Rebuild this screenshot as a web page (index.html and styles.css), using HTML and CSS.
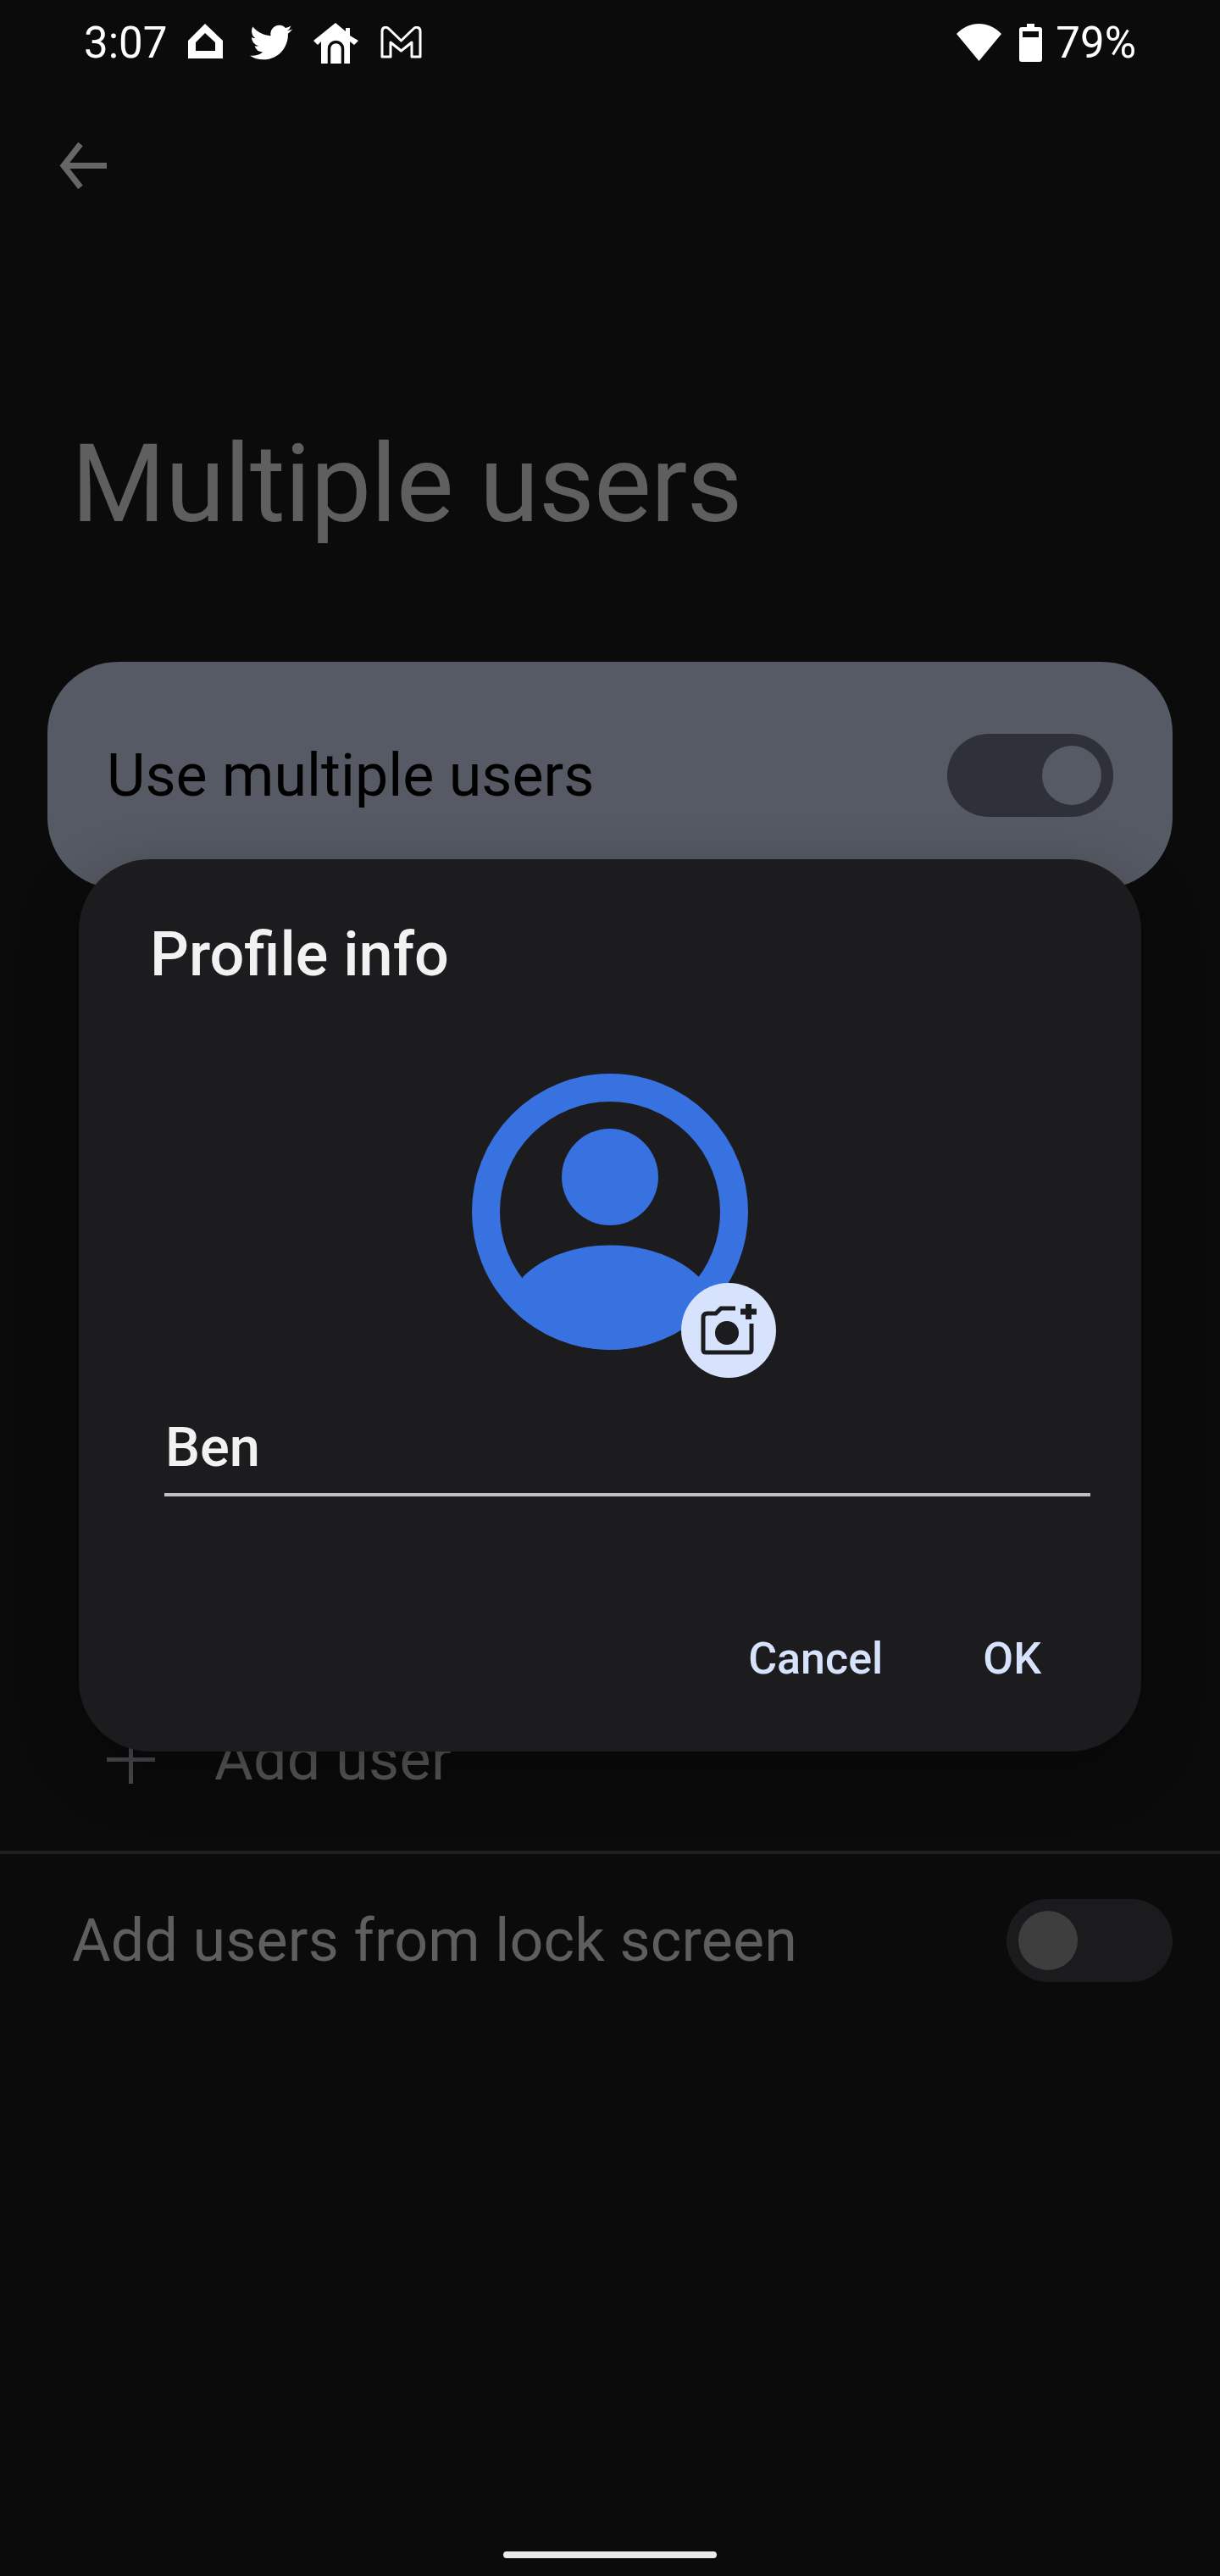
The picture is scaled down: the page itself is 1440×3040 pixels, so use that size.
FILE: index.html
```html
<!DOCTYPE html>
<html lang="en">
<head>
  <meta charset="UTF-8" />
  <title>Multiple users</title>
  <link rel="stylesheet" href="styles.css">
</head>
<body>
  <div class="screen">
    <div class="status-bar">
      <div class="status-left">
        <span class="time">3:07</span>
        <svg class="icon-ghome" viewBox="0 0 41 41"><path fill-rule="evenodd" fill="#fff" d="M20 0 41 20V41H0V20ZM20 11 9 22V32H32V22Z"/></svg>
        <svg class="icon-twitter" viewBox="0 0 24 24"><path fill="#fff" d="M23.953 4.57a10 10 0 01-2.825.775 4.958 4.958 0 002.163-2.723c-.951.555-2.005.959-3.127 1.184a4.92 4.92 0 00-8.384 4.482C7.69 8.095 4.067 6.13 1.64 3.162a4.822 4.822 0 00-.666 2.475c0 1.71.87 3.213 2.188 4.096a4.904 4.904 0 01-2.228-.616v.06a4.923 4.923 0 003.946 4.827 4.996 4.996 0 01-2.212.085 4.936 4.936 0 004.604 3.417 9.867 9.867 0 01-6.102 2.105c-.39 0-.779-.023-1.17-.067a13.995 13.995 0 007.557 2.209c9.053 0 13.998-7.496 13.998-13.985 0-.21 0-.42-.015-.63A9.935 9.935 0 0024 4.59z"/></svg>
        <svg class="icon-house" viewBox="0 0 53 49"><path fill="#fff" d="M26 1 38 11V7H43V16L53 22 48 27 43 23V49H9V23L5 27 0 22Z"/><path fill="none" stroke="#0b0b0c" stroke-width="3.500" d="M18.500 49V31.500A8 8 0 0 1 34.500 31.500V49"/></svg>
        <svg class="icon-gmail" viewBox="0 0 49 38"><path fill="none" stroke="#fff" stroke-width="3" stroke-linejoin="round" d="M2 6C2 1 7 0 10 3L24.500 17 39 3C42 0 47 1 47 6V36H37V19L24.500 29 12 19V36H2Z"/></svg>
      </div>
      <div class="status-right">
        <svg class="icon-wifi" viewBox="0 0 53 44"><path fill="#fff" d="M0 12C15-4 38-4 53 12L26.500 44Z"/></svg>
        <svg class="icon-battery" viewBox="0 0 27 45"><path fill-rule="evenodd" fill="#fff" d="M9 0H18V4H24Q27 4 27 7V42Q27 45 24 45H3Q0 45 0 42V7Q0 4 3 4H9ZM4 9V16H23V9Z"/></svg>
        <span class="battery-text">79%</span>
      </div>
    </div>

    <div class="app-bar">
      <svg class="back-arrow" viewBox="0 0 56 55"><path fill="none" stroke="#666" stroke-width="7" d="M56 27.500H5M25 2 5 27.500 25 53"/></svg>
    </div>

    <h1 class="page-title">Multiple users</h1>

    <div class="main-card">
      <span>Use multiple users</span>
      <div class="toggle toggle-on"><div class="toggle-thumb"></div></div>
    </div>

    <div class="add-user">
      <svg class="plus-icon" viewBox="0 0 57 57"><path fill="none" stroke="#4b4b50" stroke-width="5" d="M0 28.500H57M28.500 0V57"/></svg>
      <span>Add user</span>
    </div>

    <div class="divider"></div>

    <div class="lock-row">
      <span>Add users from lock screen</span>
      <div class="toggle toggle-off"><div class="toggle-thumb"></div></div>
    </div>

    <div class="home-indicator"></div>

    <div class="dialog">
      <h2 class="dialog-title">Profile info</h2>
      <div class="avatar-wrap">
        <svg class="avatar" viewBox="0 0 326 326">
          <defs><clipPath id="avatarClip"><circle cx="163" cy="163" r="163"/></clipPath></defs>
          <circle cx="163" cy="163" r="146.500" fill="none" stroke="#3871e0" stroke-width="33"/>
          <circle cx="163" cy="122" r="57" fill="#3871e0"/>
          <path clip-path="url(#avatarClip)" fill="#3871e0" d="M60 240C110 190 216 190 268 240L280 326H46Z"/>
        </svg>
        <div class="camera-badge">
          <svg viewBox="0 0 112 112">
            <path fill="none" stroke="#1c1c1e" stroke-width="5" d="M64 30H47L41 36H31Q26 36 26 41V79Q26 82 29 82H80Q83 82 83 79V48"/>
            <circle cx="54" cy="59" r="14" fill="#1c1c1e"/>
            <path fill="none" stroke="#1c1c1e" stroke-width="7" d="M70 34H89M79.500 25V43"/>
          </svg>
        </div>
      </div>
      <div class="name-field">Ben</div>
      <div class="dialog-actions">
        <span>Cancel</span>
        <span>OK</span>
      </div>
    </div>
  </div>
</body>
</html>
```

FILE: styles.css
```css
* {
  box-sizing: border-box;
}
html, body {
  margin: 0;
  padding: 0;
}
body {
  background: #0b0b0c;
  font-family: 'Roboto', 'Noto Sans', sans-serif;
}
.screen {
  position: relative;
  width: 1440px;
  height: 3040px;
  overflow: hidden;
  background: #0b0b0c;
}
.status-bar {
  display: flex;
  justify-content: space-between;
  align-items: center;
  height: 100px;
  padding: 0 99px;
  color: #fff;
}
.status-left,
.status-right {
  display: flex;
  align-items: center;
}
.time {
  font-size: 51px;
  width: 123px;
}
.icon-ghome {
  width: 41px;
  height: 41px;
  margin: -3px 32px 0 0;
}
.icon-twitter {
  width: 50px;
  height: 50px;
  margin-right: 25px;
}
.icon-house {
  width: 53px;
  height: 49px;
  margin-right: 26px;
}
.icon-gmail {
  width: 49px;
  height: 38px;
}
.icon-wifi {
  width: 53px;
  height: 44px;
  margin-right: 21px;
}
.icon-battery {
  width: 27px;
  height: 45px;
  margin-right: 16px;
}
.battery-text {
  font-size: 51px;
}
.app-bar {
  height: 96px;
  padding: 68px 0 0 70px;
}
.back-arrow {
  display: block;
  width: 56px;
  height: 55px;
}
.page-title {
  margin: 0;
  height: 585px;
  padding: 305px 0 0 84px;
  font-size: 128px;
  line-height: 140px;
  font-weight: 400;
  letter-spacing: -0.8px;
  color: #5f5f5f;
}
.main-card {
  display: flex;
  justify-content: space-between;
  align-items: center;
  width: 1328px;
  height: 268px;
  margin-left: 56px;
  padding: 0 70px;
  border-radius: 84px;
  background: #565a64;
  color: #000;
  font-size: 70px;
}
.toggle {
  display: flex;
  align-items: center;
  width: 196px;
  height: 98px;
  border-radius: 49px;
  padding: 0 14px;
}
.toggle-thumb {
  width: 70px;
  height: 70px;
  border-radius: 50%;
}
.toggle-on {
  justify-content: flex-end;
  background: #2e3138;
}
.toggle-on .toggle-thumb {
  background: #565a64;
}
.toggle-off {
  background: #1b1b1d;
}
.toggle-off .toggle-thumb {
  background: #3e3e3e;
}
.add-user {
  display: flex;
  align-items: center;
  gap: 70px;
  margin: 960px 0 41px;
  padding-left: 126px;
  height: 134px;
  color: #5a5a5a;
  font-size: 70px;
  letter-spacing: 0.3px;
}
.plus-icon {
  width: 57px;
  height: 57px;
}
.divider {
  height: 4px;
  background: #1e2022;
}
.lock-row {
  display: flex;
  justify-content: space-between;
  align-items: center;
  height: 204px;
  padding: 0 56px 0 85px;
  color: #5e5e5e;
  font-size: 70px;
  letter-spacing: 0.15px;
}
.home-indicator {
  position: absolute;
  left: 594px;
  top: 3011px;
  width: 252px;
  height: 8px;
  border-radius: 4px;
  background: #ebebeb;
}
/* dialog floats above the dimmed page */
.dialog {
  position: absolute;
  left: 93px;
  top: 1014px;
  width: 1254px;
  height: 1053px;
  padding: 70px 60px 0 80px;
  border-radius: 84px;
  background: #1c1c1e;
  box-shadow: 0 24px 70px rgba(0, 0, 0, 0.35);
  color: #f2f2f3;
}
.dialog-title {
  margin: 0;
  padding: 1px 0 0 4px;
  height: 84px;
  font-size: 72px;
  line-height: 84px;
  font-weight: 500;
}
.avatar-wrap {
  position: relative;
  width: 326px;
  height: 326px;
  margin: 99px 0 0 384px;
}
.avatar {
  display: block;
  width: 326px;
  height: 326px;
}
.camera-badge {
  position: absolute;
  left: 247px;
  top: 247px;
  width: 112px;
  height: 112px;
  border-radius: 50%;
  background: #d7e3fd;
}
.camera-badge svg {
  display: block;
}
.name-field {
  height: 173px;
  margin-left: 21px;
  padding: 70px 0 0 1px;
  border-bottom: 4px solid #bfc1c8;
  font-size: 65px;
  line-height: 90px;
  font-weight: 500;
}
.dialog-actions {
  display: flex;
  justify-content: flex-end;
  gap: 118px;
  margin-top: 162px;
  padding-right: 58px;
  color: #d7e3fd;
  font-size: 52px;
  line-height: 60px;
  font-weight: 500;
}
```
